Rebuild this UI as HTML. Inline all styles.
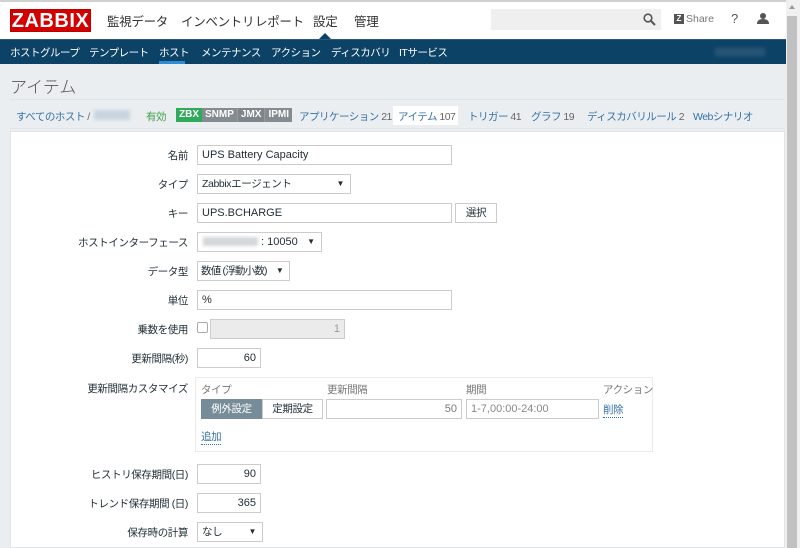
<!DOCTYPE html><html><head><meta charset="utf-8"><style>
*{box-sizing:border-box;margin:0;padding:0}
body{width:800px;height:548px;overflow:hidden;background:#ebeef0;font-family:"Liberation Sans","Noto Sans CJK JP",sans-serif;font-size:11.5px;color:#1f2c33;position:relative}
.abs{position:absolute;white-space:nowrap}
#top{left:0;top:0;width:786px;height:39px;background:#fff;border-top:2px solid #d0d0d0}
#logo{left:10px;top:9px;width:81px;height:23px;background:#d40000;color:#fff;font-weight:bold;font-size:20px;line-height:23px;text-align:center;letter-spacing:0.5px;border:1px solid #b00}
.mm{top:11px;font-size:12.5px;color:#333;letter-spacing:-0.3px}
#nav{left:0;top:39px;width:786px;height:25px;background:#0b4266;border-top:1px solid #2a5a7a}
.nv{top:45px;color:#fff;font-size:10.5px;letter-spacing:-0.5px}
#srch{left:491px;top:9px;width:170px;height:21px;background:#efefef}
#sb{left:786px;top:0;width:14px;height:548px;background:#f0f0f0}
#thumb{left:787px;top:16px;width:10px;height:532px;background:#c1c1c1}
.tb{top:109px;color:#3572a6;font-size:10.5px;letter-spacing:-0.5px}
.tb b{color:#666;font-weight:normal}
#panel{left:10px;top:131px;width:775px;height:417px;background:#fff;border:1px solid #e0e4e6}
.lb{right:612px;color:#1f2c33;font-size:10.5px;text-align:right;letter-spacing:-0.4px}
.in{height:20px;border:1px solid #ccc;background:#fff;padding:0 4px;line-height:18px;font-size:11px}
.sel:after{content:"▼";position:absolute;right:6px;font-size:8px}
.r{text-align:right}
.sm{font-size:10.5px;letter-spacing:-0.4px}
</style></head><body>
<div id="top" class="abs"></div>
<div id="logo" class="abs">ZABBIX</div>
<div class="abs mm" style="left:107px">監視データ</div>
<div class="abs mm" style="left:181px">インベントリ</div>
<div class="abs mm" style="left:255px">レポート</div>
<div class="abs mm" style="left:313px">設定</div>
<div class="abs mm" style="left:354px">管理</div>
<div class="abs" style="left:319px;top:33px;width:0;height:0;border-left:6px solid transparent;border-right:6px solid transparent;border-bottom:6px solid #0b4266"></div>
<div id="srch" class="abs"></div>
<svg class="abs" style="left:643px;top:13px" width="13" height="13"><circle cx="5" cy="5" r="3.8" fill="none" stroke="#555" stroke-width="1.6"/><line x1="8" y1="8" x2="12" y2="12" stroke="#555" stroke-width="2"/></svg>
<div class="abs" style="left:674px;top:14px;width:10px;height:10px;background:#555;color:#fff;font-size:8px;font-weight:bold;text-align:center;line-height:10px">Z</div>
<div class="abs" style="left:686px;top:13px;color:#777;font-size:10.5px">Share</div>
<div class="abs" style="left:731px;top:11px;color:#555;font-size:13px">?</div>
<svg class="abs" style="left:757px;top:12px" width="12" height="13"><circle cx="6" cy="4" r="3" fill="#555"/><path d="M0 12 Q0 7 6 7 Q12 7 12 12Z" fill="#555"/></svg>
<div id="nav" class="abs"></div>
<div class="abs nv" style="left:10px">ホストグループ</div>
<div class="abs nv" style="left:89px">テンプレート</div>
<div class="abs nv" style="left:159px">ホスト</div>
<div class="abs" style="left:159px;top:61px;width:26px;height:3px;background:#2e8bd6"></div>
<div class="abs nv" style="left:201px">メンテナンス</div>
<div class="abs nv" style="left:271px">アクション</div>
<div class="abs nv" style="left:331px">ディスカバリ</div>
<div class="abs nv" style="left:399px">ITサービス</div>
<div class="abs" style="left:715px;top:48px;width:50px;height:8px;background:#2a5777;filter:blur(2px)"></div>
<div class="abs" style="left:10px;top:73px;font-size:17px;color:#555;font-weight:300">アイテム</div>
<div class="abs" style="left:10px;top:99px;width:775px;height:1px;background:#dfe4e7"></div>
<div class="abs tb" style="left:16px">すべてのホスト <span style="color:#666">/</span></div>
<div class="abs" style="left:94px;top:110px;width:36px;height:10px;background:#c8d5e0;filter:blur(1.5px)"></div>
<div class="abs tb" style="left:146px;color:#429e47">有効</div>
<div class="abs" style="left:176px;top:108px;height:14px;font-size:10px;font-weight:bold;color:#fff;line-height:14px;display:flex">
<span style="background:#2fa95a;padding:0 3px">ZBX</span><span style="background:#858c91;padding:0 3px">SNMP</span><span style="background:#7f868b;padding:0 3px;border-left:1px solid #999">JMX</span><span style="background:#858c91;padding:0 3px;border-left:1px solid #999">IPMI</span></div>
<div class="abs tb" style="left:299px">アプリケーション <b>21</b></div>
<div class="abs" style="left:393px;top:106px;width:65px;height:19px;background:#fff"></div>
<div class="abs tb" style="left:398px">アイテム <b>107</b></div>
<div class="abs tb" style="left:468px">トリガー <b>41</b></div>
<div class="abs tb" style="left:531px">グラフ <b>19</b></div>
<div class="abs tb" style="left:587px">ディスカバリルール <b>2</b></div>
<div class="abs tb" style="left:693px">Webシナリオ</div>
<div class="abs" style="left:10px;top:128px;width:775px;height:1px;background:#dfe4e7"></div>
<div id="panel" class="abs"></div>

<div class="abs lb" style="top:148px">名前</div>
<div class="abs in" style="left:197px;top:145px;width:255px">UPS Battery Capacity</div>
<div class="abs lb" style="top:177px">タイプ</div>
<div class="abs in sel sm" style="left:197px;top:174px;width:154px">Zabbixエージェント</div>
<div class="abs lb" style="top:206px">キー</div>
<div class="abs in" style="left:197px;top:203px;width:255px">UPS.BCHARGE</div>
<div class="abs in sm" style="left:455px;top:203px;width:42px;text-align:center;background:#fff">選択</div>
<div class="abs lb" style="top:235px">ホストインターフェース</div>
<div class="abs in sel" style="left:197px;top:232px;width:125px;padding-left:63px">: 10050</div>
<div class="abs" style="left:203px;top:237px;width:55px;height:9px;background:#d3d7da;filter:blur(1.5px)"></div>
<div class="abs lb" style="top:264px">データ型</div>
<div class="abs in sel sm" style="left:197px;top:261px;width:93px;padding-left:3px;letter-spacing:-0.8px">数値 (浮動小数)</div>
<div class="abs lb" style="top:293px">単位</div>
<div class="abs in" style="left:197px;top:290px;width:255px">%</div>
<div class="abs lb" style="top:322px">乗数を使用</div>
<div class="abs" style="left:197px;top:322px;width:11px;height:11px;border:1px solid #aaa;border-radius:2px"></div>
<div class="abs in r" style="left:210px;top:319px;width:135px;background:#ebebeb;color:#999">1</div>
<div class="abs lb" style="top:351px">更新間隔(秒)</div>
<div class="abs in r" style="left:197px;top:348px;width:64px">60</div>
<div class="abs lb" style="top:381px">更新間隔カスタマイズ</div>
<div class="abs" style="left:195px;top:377px;width:458px;height:75px;border:1px solid #ebebeb"></div>
<div class="abs sm" style="left:201px;top:382px;color:#777">タイプ</div>
<div class="abs sm" style="left:327px;top:382px;color:#777">更新間隔</div>
<div class="abs sm" style="left:466px;top:382px;color:#777">期間</div>
<div class="abs sm" style="left:603px;top:382px;color:#777">アクション</div>
<div class="abs sm" style="left:201px;top:399px;width:61px;height:20px;background:#768d99;color:#fff;text-align:center;line-height:20px">例外設定</div>
<div class="abs in sm" style="left:262px;top:399px;width:61px;text-align:center">定期設定</div>
<div class="abs in r" style="left:326px;top:399px;width:136px;color:#777">50</div>
<div class="abs in" style="left:466px;top:399px;width:133px;color:#888">1-7,00:00-24:00</div>
<div class="abs sm" style="left:603px;top:402px;color:#3572a6;border-bottom:1px dotted #3572a6">削除</div>
<div class="abs sm" style="left:201px;top:429px;color:#3572a6;border-bottom:1px dotted #3572a6">追加</div>
<div class="abs lb" style="top:467px">ヒストリ保存期間(日)</div>
<div class="abs in r" style="left:197px;top:464px;width:64px">90</div>
<div class="abs lb" style="top:496px">トレンド保存期間 (日)</div>
<div class="abs in r" style="left:197px;top:493px;width:64px">365</div>
<div class="abs lb" style="top:525px">保存時の計算</div>
<div class="abs in sel sm" style="left:197px;top:522px;width:66px">なし</div>
<div id="sb" class="abs"></div>
<div id="thumb" class="abs"></div>
<div class="abs" style="left:789px;top:5px;width:0;height:0;border-left:3px solid transparent;border-right:3px solid transparent;border-bottom:4px solid #999"></div>
</body></html>
